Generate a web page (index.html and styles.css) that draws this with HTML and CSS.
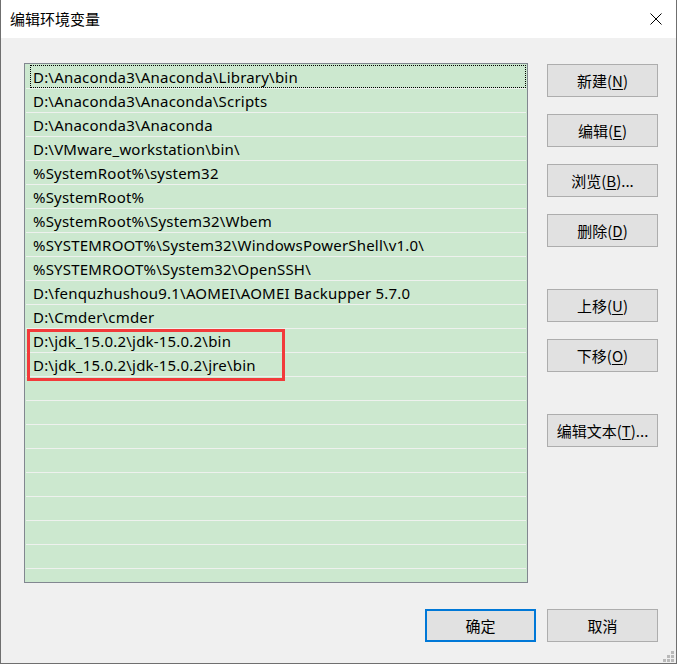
FILE: index.html
```html
<!DOCTYPE html>
<html lang="zh-CN">
<head>
<meta charset="utf-8">
<title>编辑环境变量</title>
<link rel="stylesheet" href="styles.css">
</head>
<body>
<div class="window">
  <div class="titlebar">
    <span class="title">编辑环境变量</span>
    <svg class="close" width="12" height="12" viewBox="0 0 12 12"><path d="M0.5 0.5L11.5 11.5M11.5 0.5L0.5 11.5" stroke="#000" stroke-width="1" fill="none"/></svg>
  </div>
  <div class="content">
    <div class="list">
      <div class="rows">
        <div class="row"><span class="cell focus">D:\Anaconda3\Anaconda\Library\bin</span></div>
        <div class="row"><span class="cell">D:\Anaconda3\Anaconda\Scripts</span></div>
        <div class="row"><span class="cell">D:\Anaconda3\Anaconda</span></div>
        <div class="row"><span class="cell">D:\VMware_workstation\bin\</span></div>
        <div class="row"><span class="cell">%SystemRoot%\system32</span></div>
        <div class="row"><span class="cell">%SystemRoot%</span></div>
        <div class="row"><span class="cell">%SystemRoot%\System32\Wbem</span></div>
        <div class="row"><span class="cell">%SYSTEMROOT%\System32\WindowsPowerShell\v1.0\</span></div>
        <div class="row"><span class="cell">%SYSTEMROOT%\System32\OpenSSH\</span></div>
        <div class="row"><span class="cell">D:\fenquzhushou9.1\AOMEI\AOMEI Backupper 5.7.0</span></div>
        <div class="row"><span class="cell">D:\Cmder\cmder</span></div>
        <div class="row"><span class="cell">D:\jdk_15.0.2\jdk-15.0.2\bin</span></div>
        <div class="row"><span class="cell">D:\jdk_15.0.2\jdk-15.0.2\jre\bin</span></div>
        <div class="row"><span class="cell"></span></div>
        <div class="row"><span class="cell"></span></div>
        <div class="row"><span class="cell"></span></div>
        <div class="row"><span class="cell"></span></div>
        <div class="row"><span class="cell"></span></div>
        <div class="row"><span class="cell"></span></div>
        <div class="row"><span class="cell"></span></div>
        <div class="row"><span class="cell"></span></div>
        <div class="row"><span class="cell"></span></div>
      </div>
      <div class="highlight"></div>
    </div>
    <div class="side">
      <div class="group">
        <button class="btn">新建(<u>N</u>)</button>
        <button class="btn">编辑(<u>E</u>)</button>
        <button class="btn">浏览(<u>B</u>)...</button>
        <button class="btn">删除(<u>D</u>)</button>
      </div>
      <div class="group">
        <button class="btn">上移(<u>U</u>)</button>
        <button class="btn">下移(<u>O</u>)</button>
      </div>
      <div class="group">
        <button class="btn">编辑文本(<u>T</u>)...</button>
      </div>
    </div>
  </div>
  <div class="footer">
    <button class="btn default">确定</button>
    <button class="btn">取消</button>
    <svg class="grip" width="11" height="11" viewBox="0 0 11 11">
      <rect x="8" y="0" width="3" height="3" fill="#b9b9b9"/>
      <rect x="4" y="4" width="3" height="3" fill="#b9b9b9"/>
      <rect x="8" y="4" width="3" height="3" fill="#b9b9b9"/>
      <rect x="0" y="8" width="3" height="3" fill="#b9b9b9"/>
      <rect x="4" y="8" width="3" height="3" fill="#b9b9b9"/>
      <rect x="8" y="8" width="3" height="3" fill="#b9b9b9"/>
    </svg>
  </div>
</div>
</body>
</html>
```
FILE: styles.css
```css
* { box-sizing: border-box; }
html, body { margin: 0; padding: 0; }
body {
  width: 677px;
  height: 664px;
  overflow: hidden;
  background: #f0f0f0;
  font-family: "Noto Sans", "Noto Sans CJK SC", sans-serif;
  font-size: 15px;
  color: #000;
}
.window {
  width: 677px;
  height: 664px;
  border-left: 1px solid #6f6f6f;
  border-right: 1px solid #6f6f6f;
  border-bottom: 1px solid #6f6f6f;
  background: #f0f0f0;
  display: flex;
  flex-direction: column;
  position: relative;
}
.titlebar {
  height: 38px;
  background: #fff;
  display: flex;
  align-items: center;
  justify-content: space-between;
  padding: 0 14px 0 9px;
}
.title {
  font-family: "Noto Sans CJK SC", sans-serif;
  font-size: 15px;
  line-height: 20px;
}
.close { display: block; }
.content {
  display: flex;
  padding: 25px 18px 0 23px;
  gap: 19px;
}
.list {
  width: 504px;
  height: 520px;
  border: 1px solid #828790;
  background: #cce8cf;
  padding: 1px 1px 0 1px;
  overflow: hidden;
  position: relative;
}
.rows { display: flex; flex-direction: column; }
.row {
  height: 24px;
  border-bottom: 1px solid #eef1ee;
  display: flex;
  flex-shrink: 0;
}
.cell {
  flex: 1;
  margin-left: 4px;
  padding-left: 3px;
  padding-top: 1px;
  height: 23px;
  line-height: 22px;
  white-space: nowrap;
  letter-spacing: 0.2px;
}
.cell.focus { outline: 1px dotted #000; outline-offset: -1px; }
.highlight {
  position: absolute;
  left: 2px;
  top: 265px;
  width: 258px;
  height: 52px;
  border: 3px solid #f23a3a;
}
.side {
  width: 111px;
  padding-top: 1px;
  display: flex;
  flex-direction: column;
  gap: 42px;
}
.group { display: flex; flex-direction: column; gap: 17px; }
.btn {
  width: 111px;
  height: 33px;
  background: #e1e1e1;
  border: 1px solid #adadad;
  border-radius: 0;
  padding: 0;
  margin: 0;
  font-family: "Noto Sans CJK SC", sans-serif;
  font-size: 15px;
  color: #000;
  line-height: 20px;
}
.btn u { text-decoration-thickness: 1px; text-underline-offset: 2px; }
.btn.default { border: 2px solid #0078d7; }
.footer {
  display: flex;
  justify-content: flex-end;
  gap: 11px;
  padding: 26px 18px 0 0;
  flex: 1;
  position: relative;
}
.grip { position: absolute; right: 2px; bottom: 1px; }
```
